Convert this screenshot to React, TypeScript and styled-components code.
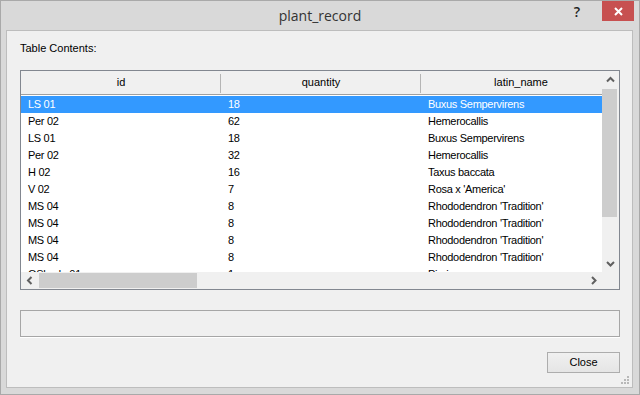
import React from "react";
import styled, { createGlobalStyle } from "styled-components";

const GlobalStyle = createGlobalStyle`
  html, body { margin: 0; padding: 0; }
  body {
    width: 640px;
    height: 395px;
    overflow: hidden;
    background: #d9d9d9;
    font-family: "Liberation Sans", Arial, sans-serif;
  }
`;

const Window = styled.div`
  width: 640px;
  height: 395px;
  box-sizing: border-box;
  border: 1px solid #a9a9a9;
  background: #d9d9d9;
  display: flex;
  flex-direction: column;
  padding: 0 6px 6px 5px;
`;

const TitleBar = styled.div`
  height: 29px;
  margin: 0 -6px 0 -5px;
  display: grid;
  grid-template-columns: 1fr auto 1fr;
  align-items: start;
  flex-shrink: 0;
`;

const Title = styled.div`
  grid-column: 2;
  font-family: "Open Sans", "Noto Sans", sans-serif;
  font-size: 14px;
  line-height: 30px;
  color: #333333;
`;

const Controls = styled.div`
  grid-column: 3;
  justify-self: end;
  display: flex;
  margin-right: 5px;
`;

const HelpButton = styled.div`
  width: 30px;
  height: 20px;
  margin-right: 10px;
  text-align: center;
  font-family: "Open Sans", "Noto Sans", sans-serif;
  font-weight: 600;
  font-size: 14px;
  line-height: 22px;
  color: #222;
`;

const CloseButton = styled.div`
  width: 32px;
  height: 20px;
  background: #c75050;
  display: flex;
  align-items: center;
  justify-content: center;
`;

const Client = styled.div`
  flex: 1;
  position: relative;
  border: 1px solid #bdbdbd;
  background: #f0f0f0;
  display: flex;
  flex-direction: column;
  padding: 11px 12px 0 13px;
`;

const Label = styled.div`
  font-size: 11px;
  line-height: 13px;
  color: #000;
`;

const ListBox = styled.div`
  margin-top: 15px;
  width: 600px;
  height: 220px;
  box-sizing: border-box;
  border: 1px solid #828790;
  background: #fff;
  display: grid;
  grid-template-columns: 1fr 17px;
  grid-template-rows: 1fr 17px;
`;

const Content = styled.div`
  overflow: hidden;
  min-width: 0;
  min-height: 0;
`;

const HeaderRow = styled.div`
  display: flex;
  height: 24px;
  box-sizing: border-box;
  border-bottom: 1px solid #a0a0a0;
  background: #f0f0f0;
`;

const HeaderCell = styled.div`
  position: relative;
  width: 200px;
  flex-shrink: 0;
  text-align: center;
  font-size: 11px;
  line-height: 23px;
  color: #000;
  &::after {
    content: "";
    position: absolute;
    right: 0;
    top: 3px;
    bottom: 1px;
    width: 1px;
    background: #b5b5b5;
  }
`;

const Rows = styled.div`
  padding-top: 1px;
`;

const Row = styled.div<{ $selected?: boolean }>`
  display: flex;
  height: 17px;
  background: ${(p) => (p.$selected ? "#3399ff" : "transparent")};
  color: ${(p) => (p.$selected ? "#ffffff" : "#000000")};
`;

const Cell = styled.div`
  width: 200px;
  flex-shrink: 0;
  box-sizing: border-box;
  padding-left: 7px;
  font-size: 11px;
  line-height: 17px;
  letter-spacing: -0.3px;
  white-space: nowrap;
`;

const VScroll = styled.div`
  background: #f0f0f0;
  display: flex;
  flex-direction: column;
`;

const HScroll = styled.div`
  background: #f0f0f0;
  display: flex;
  flex-direction: row;
`;

const ArrowCell = styled.div`
  width: 17px;
  height: 17px;
  flex-shrink: 0;
  display: flex;
  align-items: center;
  justify-content: center;
`;

const Spacer = styled.div`
  flex: 1;
`;

const VThumb = styled.div`
  width: 15px;
  height: 128px;
  margin-top: 1px;
  background: #cdcdcd;
`;

const HThumb = styled.div`
  width: 158px;
  height: 15px;
  margin: 1px 0 0 1px;
  background: #cdcdcd;
`;

const Corner = styled.div`
  background: #f0f0f0;
`;

const StatusBox = styled.div`
  margin-top: 20px;
  width: 600px;
  height: 27px;
  box-sizing: border-box;
  border: 1px solid #a6a6a6;
  box-shadow: 0 1px 0 #ffffff;
`;

const ButtonRow = styled.div`
  display: flex;
  justify-content: flex-end;
  margin-top: 15px;
  width: 600px;
`;

const Button = styled.div`
  width: 73px;
  height: 21px;
  box-sizing: border-box;
  border: 1px solid #adadad;
  background: linear-gradient(#f0f0f0, #e5e5e5);
  font-size: 11px;
  line-height: 19px;
  text-align: center;
  color: #000;
`;

const Grip = styled.svg`
  position: absolute;
  right: 2px;
  bottom: 2px;
`;

const Chevron = ({ dir }: { dir: "up" | "down" | "left" | "right" }) => {
  const pts: Record<string, string> = {
    up: "1,5.5 4.5,2 8,5.5",
    down: "1,2 4.5,5.5 8,2",
    left: "5.5,1 2,4.5 5.5,8",
    right: "2,1 5.5,4.5 2,8",
  };
  const horiz = dir === "left" || dir === "right";
  return (
    <svg width={horiz ? 8 : 9} height={horiz ? 9 : 8} viewBox={horiz ? "0 0 8 9" : "0 0 9 8"}>
      <polyline points={pts[dir]} fill="none" stroke="#606060" strokeWidth="2" />
    </svg>
  );
};

const data: [string, string, string][] = [
  ["LS 01", "18", "Buxus Sempervirens"],
  ["Per 02", "62", "Hemerocallis"],
  ["LS 01", "18", "Buxus Sempervirens"],
  ["Per 02", "32", "Hemerocallis"],
  ["H 02", "16", "Taxus baccata"],
  ["V 02", "7", "Rosa x 'America'"],
  ["MS 04", "8", "Rhododendron 'Tradition'"],
  ["MS 04", "8", "Rhododendron 'Tradition'"],
  ["MS 04", "8", "Rhododendron 'Tradition'"],
  ["MS 04", "8", "Rhododendron 'Tradition'"],
  ["OShade 01", "1", "Pieris"],
];

export default function App() {
  return (
    <>
      <GlobalStyle />
      <Window>
        <TitleBar>
          <Title>plant_record</Title>
          <Controls>
            <HelpButton>?</HelpButton>
            <CloseButton>
              <svg width="9" height="9" viewBox="0 0 9 9">
                <path d="M1 1 L8 8 M8 1 L1 8" stroke="#fff" strokeWidth="2" />
              </svg>
            </CloseButton>
          </Controls>
        </TitleBar>
        <Client>
          <Label>Table Contents:</Label>
          <ListBox>
            <Content>
              <HeaderRow>
                <HeaderCell>id</HeaderCell>
                <HeaderCell>quantity</HeaderCell>
                <HeaderCell>latin_name</HeaderCell>
              </HeaderRow>
              <Rows>
                {data.map((r, i) => (
                  <Row key={i} $selected={i === 0}>
                    <Cell>{r[0]}</Cell>
                    <Cell>{r[1]}</Cell>
                    <Cell>{r[2]}</Cell>
                  </Row>
                ))}
              </Rows>
            </Content>
            <VScroll>
              <ArrowCell>
                <Chevron dir="up" />
              </ArrowCell>
              <VThumb />
              <Spacer />
              <ArrowCell>
                <Chevron dir="down" />
              </ArrowCell>
            </VScroll>
            <HScroll>
              <ArrowCell>
                <Chevron dir="left" />
              </ArrowCell>
              <HThumb />
              <Spacer />
              <ArrowCell>
                <Chevron dir="right" />
              </ArrowCell>
            </HScroll>
            <Corner />
          </ListBox>
          <StatusBox />
          <ButtonRow>
            <Button>Close</Button>
          </ButtonRow>
          <Grip width="9" height="9" viewBox="0 0 9 9">
            <rect x="6" y="0" width="2" height="2" fill="#b8b8b8" />
            <rect x="3" y="3" width="2" height="2" fill="#b8b8b8" />
            <rect x="6" y="3" width="2" height="2" fill="#b8b8b8" />
            <rect x="0" y="6" width="2" height="2" fill="#b8b8b8" />
            <rect x="3" y="6" width="2" height="2" fill="#b8b8b8" />
            <rect x="6" y="6" width="2" height="2" fill="#b8b8b8" />
          </Grip>
        </Client>
      </Window>
    </>
  );
}
